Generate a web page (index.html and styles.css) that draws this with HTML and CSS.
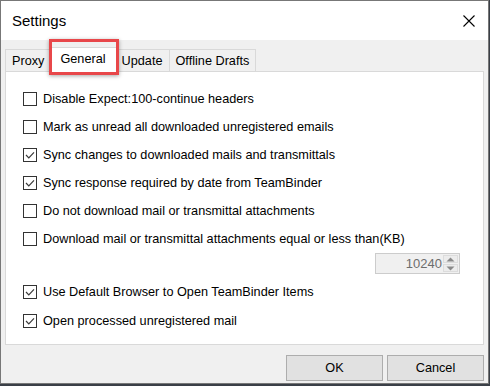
FILE: index.html
```html
<!DOCTYPE html>
<html>
<head>
<meta charset="utf-8">
<link rel="stylesheet" href="styles.css">
</head>
<body>
<div class="window">
  <div class="titlebar">
    <span class="title">Settings</span>
    <svg class="close" width="12" height="12" viewBox="0 0 12 12"><path d="M0.5 0.5 L11.5 11.5 M11.5 0.5 L0.5 11.5" stroke="#000" stroke-width="1.1" fill="none"/></svg>
  </div>
  <div class="content">
    <div class="tabs">
      <div class="tab first">Proxy</div>
      <div class="tab selected">General</div>
      <div class="tab">Update</div>
      <div class="tab">Offline Drafts</div>
    </div>
    <div class="panel">
      <div class="row"><span class="cb"></span><span>Disable Expect:100-continue headers</span></div>
      <div class="row"><span class="cb"></span><span>Mark as unread all downloaded unregistered emails</span></div>
      <div class="row"><span class="cb"><svg width="12" height="12" viewBox="0 0 12 12"><path d="M2 6 L4.8 8.8 L10 3.4" stroke="#3a3a3a" stroke-width="1.2" fill="none"/></svg></span><span>Sync changes to downloaded mails and transmittals</span></div>
      <div class="row"><span class="cb"><svg width="12" height="12" viewBox="0 0 12 12"><path d="M2 6 L4.8 8.8 L10 3.4" stroke="#3a3a3a" stroke-width="1.2" fill="none"/></svg></span><span>Sync response required by date from TeamBinder</span></div>
      <div class="row"><span class="cb"></span><span>Do not download mail or transmittal attachments</span></div>
      <div class="row"><span class="cb"></span><span>Download mail or transmittal attachments equal or less than(KB)</span></div>
      <div class="spin-row">
        <div class="spin">
          <span class="val">10240</span>
          <div class="arrows">
            <span class="arr"><svg width="9" height="5" viewBox="0 0 9 5"><path d="M0.5 4.5 L4.5 0.5 L8.5 4.5 Z" fill="#8a8a8a"/></svg></span>
            <span class="arr"><svg width="9" height="5" viewBox="0 0 9 5"><path d="M0.5 0.5 L4.5 4.5 L8.5 0.5 Z" fill="#8a8a8a"/></svg></span>
          </div>
        </div>
      </div>
      <div class="row"><span class="cb"><svg width="12" height="12" viewBox="0 0 12 12"><path d="M2 6 L4.8 8.8 L10 3.4" stroke="#3a3a3a" stroke-width="1.2" fill="none"/></svg></span><span>Use Default Browser to Open TeamBinder Items</span></div>
      <div class="row last"><span class="cb"><svg width="12" height="12" viewBox="0 0 12 12"><path d="M2 6 L4.8 8.8 L10 3.4" stroke="#3a3a3a" stroke-width="1.2" fill="none"/></svg></span><span>Open processed unregistered mail</span></div>
    </div>
    <div class="buttons">
      <button class="btn">OK</button>
      <button class="btn">Cancel</button>
    </div>
  </div>
  <div class="highlight"></div>
</div>
</body>
</html>
```
FILE: styles.css
```css
* { box-sizing: border-box; }
body {
  margin: 0;
  background: #3a3f47;
  font-family: "Liberation Sans", Arial, sans-serif;
  font-size: 12.7px;
  color: #000;
}
.window {
  position: relative;
  width: 489px;
  height: 384px;
  border: 1px solid #777;
  background: #f0f0f0;
  display: flex;
  flex-direction: column;
}
.titlebar {
  height: 39px;
  flex: none;
  background: #fff;
  display: flex;
  align-items: center;
  justify-content: space-between;
  padding: 0 13px 0 11px;
}
.title { font-size: 15px; }
.close { display: block; }
.content {
  flex: 1;
  padding: 7px 4px 0 4px;
  display: flex;
  flex-direction: column;
}
.tabs {
  display: flex;
  align-items: flex-end;
  height: 24px;
  flex: none;
}
.tab {
  height: 22px;
  padding: 0 6px;
  border: 1px solid #d9d9d9;
  border-bottom: none;
  background: #f0f0f0;
  display: flex;
  align-items: center;
  margin-left: -1px;
  white-space: nowrap;
}
.tab.first { margin-left: 0; padding: 0 6px; }
.tab.selected {
  height: 25px;
  margin: 0 -1px -1px -2px;
  padding: 0 10px 2px;
  background: #fff;
  position: relative;
  z-index: 1;
}
.panel {
  height: 274px;
  flex: none;
  background: #fff;
  border: 1px solid #d9d9d9;
  padding: 13px 0 0 17px;
}
.row {
  display: flex;
  align-items: center;
  height: 28px;
  gap: 6px;
  white-space: nowrap;
}
.row.last { margin-top: 1px; }
.cb {
  width: 14px;
  height: 14px;
  flex: none;
  border: 1px solid #333;
  background: #fff;
  display: flex;
  align-items: center;
  justify-content: center;
}
.cb svg { display: block; }
.spin-row {
  height: 21px;
  padding-left: 352px;
  margin-bottom: 4px;
}
.spin {
  width: 85px;
  height: 21px;
  border: 1px solid #cccccc;
  background: #f0f0f0;
  display: flex;
}
.val {
  flex: 1;
  text-align: right;
  color: #6d6d6d;
  padding-right: 1px;
  line-height: 19px;
  font-size: 13px;
}
.arrows {
  width: 16px;
  display: flex;
  flex-direction: column;
  padding: 1px 1px 1px 0;
  gap: 1px;
}
.arr {
  flex: 1;
  display: flex;
  align-items: center;
  justify-content: center;
  background: #ececec;
  border: 1px solid #dcdcdc;
}
.arr svg { display: block; }
.buttons {
  display: flex;
  justify-content: flex-end;
  gap: 4px;
  padding-top: 10px;
}
.btn {
  width: 97px;
  height: 26px;
  background: #e1e1e1;
  border: 1px solid #adadad;
  font-family: inherit;
  font-size: 12.7px;
  color: #000;
  padding: 0;
}
.highlight {
  position: absolute;
  left: 48px;
  top: 38px;
  width: 70px;
  height: 36px;
  border: 3px solid #e8474a;
  box-shadow: 0 1px 4px rgba(0, 0, 0, 0.35);
  z-index: 2;
}
```
